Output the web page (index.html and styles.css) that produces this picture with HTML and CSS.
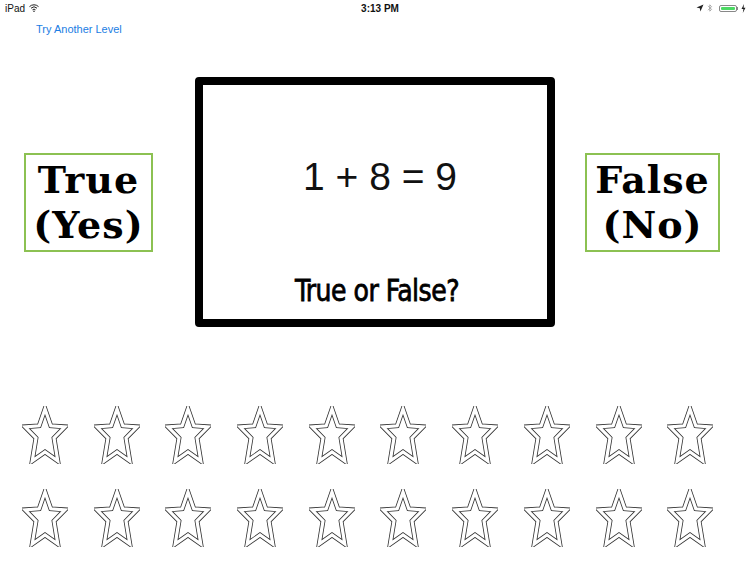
FILE: index.html
```html
<!DOCTYPE html>
<html>
<head>
<meta charset="utf-8">
<link rel="stylesheet" href="styles.css">
</head>
<body>
<div class="status">
  <div class="status-left">iPad
    <svg class="wifi" width="10" height="8" viewBox="0 0 10 8"><path d="M0.5 2.6 A6.5 6.5 0 0 1 9.5 2.6" fill="none" stroke="#222" stroke-width="1"/><path d="M2 4.2 A4.3 4.3 0 0 1 8 4.2" fill="none" stroke="#222" stroke-width="1"/><path d="M3.5 5.8 A2.2 2.2 0 0 1 6.5 5.8" fill="none" stroke="#222" stroke-width="1"/><circle cx="5" cy="7.2" r="0.8" fill="#222"/></svg>
  </div>
  <div class="status-time">3:13 PM</div>
  <div class="status-right">
    <svg width="8" height="8" viewBox="0 0 8 8"><path d="M7.5 0.5 L0.5 3.6 L3.8 4.2 L4.4 7.5 Z" fill="#222"/></svg>
    <svg width="6" height="10" viewBox="0 0 6 10"><path d="M1 2.8 L4.6 6.4 L2.8 8.2 L2.8 1.8 L4.6 3.6 L1 7.2" fill="none" stroke="#999" stroke-width="0.8"/></svg>
    <span class="battery"><span class="battery-fill"></span></span><span class="battery-tip"></span>
    <svg width="5" height="9" viewBox="0 0 5 9"><path d="M3 0 L0.5 5 L2.4 5 L1.8 9 L4.5 3.8 L2.6 3.8 Z" fill="#222"/></svg>
  </div>
</div>
<div class="toplink">Try Another Level</div>
<div class="middle">
  <div class="answer answer-true">True<br>(Yes)</div>
  <div class="card">
    <div class="equation">1 + 8 = 9</div>
    <div class="question">True or False?</div>
  </div>
  <div class="answer answer-false">False<br>(No)</div>
</div>
<div class="stars">
  <div class="star-row">
    <svg class="star" viewBox="0 0 46 58"><polygon class="s-out" points="23,3 28.8,19.8 43,20.8 32,32 35.8,55 23,46 10.2,55 14,32 3,20.8 17.2,19.8"/><polygon class="s-in" points="23,3 28.8,19.8 43,20.8 32,32 35.8,55 23,46 10.2,55 14,32 3,20.8 17.2,19.8"/></svg>
    <svg class="star" viewBox="0 0 46 58"><polygon class="s-out" points="23,3 28.8,19.8 43,20.8 32,32 35.8,55 23,46 10.2,55 14,32 3,20.8 17.2,19.8"/><polygon class="s-in" points="23,3 28.8,19.8 43,20.8 32,32 35.8,55 23,46 10.2,55 14,32 3,20.8 17.2,19.8"/></svg>
    <svg class="star" viewBox="0 0 46 58"><polygon class="s-out" points="23,3 28.8,19.8 43,20.8 32,32 35.8,55 23,46 10.2,55 14,32 3,20.8 17.2,19.8"/><polygon class="s-in" points="23,3 28.8,19.8 43,20.8 32,32 35.8,55 23,46 10.2,55 14,32 3,20.8 17.2,19.8"/></svg>
    <svg class="star" viewBox="0 0 46 58"><polygon class="s-out" points="23,3 28.8,19.8 43,20.8 32,32 35.8,55 23,46 10.2,55 14,32 3,20.8 17.2,19.8"/><polygon class="s-in" points="23,3 28.8,19.8 43,20.8 32,32 35.8,55 23,46 10.2,55 14,32 3,20.8 17.2,19.8"/></svg>
    <svg class="star" viewBox="0 0 46 58"><polygon class="s-out" points="23,3 28.8,19.8 43,20.8 32,32 35.8,55 23,46 10.2,55 14,32 3,20.8 17.2,19.8"/><polygon class="s-in" points="23,3 28.8,19.8 43,20.8 32,32 35.8,55 23,46 10.2,55 14,32 3,20.8 17.2,19.8"/></svg>
    <svg class="star" viewBox="0 0 46 58"><polygon class="s-out" points="23,3 28.8,19.8 43,20.8 32,32 35.8,55 23,46 10.2,55 14,32 3,20.8 17.2,19.8"/><polygon class="s-in" points="23,3 28.8,19.8 43,20.8 32,32 35.8,55 23,46 10.2,55 14,32 3,20.8 17.2,19.8"/></svg>
    <svg class="star" viewBox="0 0 46 58"><polygon class="s-out" points="23,3 28.8,19.8 43,20.8 32,32 35.8,55 23,46 10.2,55 14,32 3,20.8 17.2,19.8"/><polygon class="s-in" points="23,3 28.8,19.8 43,20.8 32,32 35.8,55 23,46 10.2,55 14,32 3,20.8 17.2,19.8"/></svg>
    <svg class="star" viewBox="0 0 46 58"><polygon class="s-out" points="23,3 28.8,19.8 43,20.8 32,32 35.8,55 23,46 10.2,55 14,32 3,20.8 17.2,19.8"/><polygon class="s-in" points="23,3 28.8,19.8 43,20.8 32,32 35.8,55 23,46 10.2,55 14,32 3,20.8 17.2,19.8"/></svg>
    <svg class="star" viewBox="0 0 46 58"><polygon class="s-out" points="23,3 28.8,19.8 43,20.8 32,32 35.8,55 23,46 10.2,55 14,32 3,20.8 17.2,19.8"/><polygon class="s-in" points="23,3 28.8,19.8 43,20.8 32,32 35.8,55 23,46 10.2,55 14,32 3,20.8 17.2,19.8"/></svg>
    <svg class="star" viewBox="0 0 46 58"><polygon class="s-out" points="23,3 28.8,19.8 43,20.8 32,32 35.8,55 23,46 10.2,55 14,32 3,20.8 17.2,19.8"/><polygon class="s-in" points="23,3 28.8,19.8 43,20.8 32,32 35.8,55 23,46 10.2,55 14,32 3,20.8 17.2,19.8"/></svg>
  </div>
  <div class="star-row">
    <svg class="star" viewBox="0 0 46 58"><polygon class="s-out" points="23,3 28.8,19.8 43,20.8 32,32 35.8,55 23,46 10.2,55 14,32 3,20.8 17.2,19.8"/><polygon class="s-in" points="23,3 28.8,19.8 43,20.8 32,32 35.8,55 23,46 10.2,55 14,32 3,20.8 17.2,19.8"/></svg>
    <svg class="star" viewBox="0 0 46 58"><polygon class="s-out" points="23,3 28.8,19.8 43,20.8 32,32 35.8,55 23,46 10.2,55 14,32 3,20.8 17.2,19.8"/><polygon class="s-in" points="23,3 28.8,19.8 43,20.8 32,32 35.8,55 23,46 10.2,55 14,32 3,20.8 17.2,19.8"/></svg>
    <svg class="star" viewBox="0 0 46 58"><polygon class="s-out" points="23,3 28.8,19.8 43,20.8 32,32 35.8,55 23,46 10.2,55 14,32 3,20.8 17.2,19.8"/><polygon class="s-in" points="23,3 28.8,19.8 43,20.8 32,32 35.8,55 23,46 10.2,55 14,32 3,20.8 17.2,19.8"/></svg>
    <svg class="star" viewBox="0 0 46 58"><polygon class="s-out" points="23,3 28.8,19.8 43,20.8 32,32 35.8,55 23,46 10.2,55 14,32 3,20.8 17.2,19.8"/><polygon class="s-in" points="23,3 28.8,19.8 43,20.8 32,32 35.8,55 23,46 10.2,55 14,32 3,20.8 17.2,19.8"/></svg>
    <svg class="star" viewBox="0 0 46 58"><polygon class="s-out" points="23,3 28.8,19.8 43,20.8 32,32 35.8,55 23,46 10.2,55 14,32 3,20.8 17.2,19.8"/><polygon class="s-in" points="23,3 28.8,19.8 43,20.8 32,32 35.8,55 23,46 10.2,55 14,32 3,20.8 17.2,19.8"/></svg>
    <svg class="star" viewBox="0 0 46 58"><polygon class="s-out" points="23,3 28.8,19.8 43,20.8 32,32 35.8,55 23,46 10.2,55 14,32 3,20.8 17.2,19.8"/><polygon class="s-in" points="23,3 28.8,19.8 43,20.8 32,32 35.8,55 23,46 10.2,55 14,32 3,20.8 17.2,19.8"/></svg>
    <svg class="star" viewBox="0 0 46 58"><polygon class="s-out" points="23,3 28.8,19.8 43,20.8 32,32 35.8,55 23,46 10.2,55 14,32 3,20.8 17.2,19.8"/><polygon class="s-in" points="23,3 28.8,19.8 43,20.8 32,32 35.8,55 23,46 10.2,55 14,32 3,20.8 17.2,19.8"/></svg>
    <svg class="star" viewBox="0 0 46 58"><polygon class="s-out" points="23,3 28.8,19.8 43,20.8 32,32 35.8,55 23,46 10.2,55 14,32 3,20.8 17.2,19.8"/><polygon class="s-in" points="23,3 28.8,19.8 43,20.8 32,32 35.8,55 23,46 10.2,55 14,32 3,20.8 17.2,19.8"/></svg>
    <svg class="star" viewBox="0 0 46 58"><polygon class="s-out" points="23,3 28.8,19.8 43,20.8 32,32 35.8,55 23,46 10.2,55 14,32 3,20.8 17.2,19.8"/><polygon class="s-in" points="23,3 28.8,19.8 43,20.8 32,32 35.8,55 23,46 10.2,55 14,32 3,20.8 17.2,19.8"/></svg>
    <svg class="star" viewBox="0 0 46 58"><polygon class="s-out" points="23,3 28.8,19.8 43,20.8 32,32 35.8,55 23,46 10.2,55 14,32 3,20.8 17.2,19.8"/><polygon class="s-in" points="23,3 28.8,19.8 43,20.8 32,32 35.8,55 23,46 10.2,55 14,32 3,20.8 17.2,19.8"/></svg>
  </div>
</div>
</body>
</html>
```

FILE: styles.css
```css
html, body {
  margin: 0;
  padding: 0;
  background: #fff;
}
body {
  width: 750px;
  height: 563px;
  overflow: hidden;
  font-family: "Liberation Sans", Arial, sans-serif;
  color: #111;
}
.status {
  height: 16px;
  display: grid;
  grid-template-columns: 1fr auto 1fr;
  align-items: center;
  font-size: 10px;
  color: #111;
}
.status-left {
  padding-left: 5px;
  display: flex;
  align-items: center;
  gap: 4px;
}
.status-time {
  font-weight: bold;
  padding-left: 10px;
}
.status-right {
  display: flex;
  align-items: center;
  justify-content: flex-end;
  gap: 3px;
  padding-right: 4px;
}
.battery {
  width: 18px;
  height: 7px;
  border: 1px solid #888;
  border-radius: 2px;
  padding: 1px;
  box-sizing: border-box;
  display: flex;
  margin-left: 3px;
}
.battery-fill {
  flex: 1;
  background: #4cd964;
  border-radius: 1px;
}
.battery-tip {
  width: 1.5px;
  height: 3px;
  background: #888;
  margin-left: -3px;
}
.toplink {
  padding-left: 36px;
  margin-top: 7px;
  font-size: 11px;
  line-height: 13px;
  color: #1b7de3;
}
.middle {
  display: flex;
  align-items: center;
  margin-top: 41px;
  padding-left: 24px;
}
.answer {
  border: 2px solid #8cc152;
  box-sizing: border-box;
  height: 99px;
  display: flex;
  align-items: center;
  justify-content: center;
  text-align: center;
  font-family: "DejaVu Serif", "Liberation Serif", serif;
  font-weight: bold;
  font-size: 38px;
  letter-spacing: 1px;
  line-height: 45px;
  color: #000;
}
.answer-true {
  width: 129px;
  margin-right: 42px;
}
.answer-false {
  width: 135px;
  margin-left: 30px;
}
.card {
  width: 360px;
  height: 250px;
  box-sizing: border-box;
  border: 8px solid #000;
  border-radius: 4px;
  display: flex;
  flex-direction: column;
  align-items: center;
  padding-top: 73px;
}
.equation {
  font-size: 39px;
  line-height: 38px;
  padding-left: 10px;
}
.question {
  margin-top: 80px;
  font-family: "DejaVu Sans Condensed", "DejaVu Sans", sans-serif;
  font-size: 28px;
  letter-spacing: -0.5px;
  line-height: 30px;
  padding-left: 4px;
  -webkit-text-stroke: 0.7px #000;
  color: #000;
  transform: scaleY(1.08);
}
.stars {
  margin-top: 79px;
  padding-left: 22px;
  display: flex;
  flex-direction: column;
  gap: 25px;
}
.star-row {
  display: flex;
  gap: 25.7px;
}
.star {
  width: 46px;
  height: 58px;
  display: block;
}
.s-out {
  fill: none;
  stroke: #333;
  stroke-width: 4.8;
  stroke-linejoin: miter;
  stroke-miterlimit: 10;
}
.s-in {
  fill: none;
  stroke: #fff;
  stroke-width: 3.2;
  stroke-linejoin: miter;
  stroke-miterlimit: 10;
}
```
